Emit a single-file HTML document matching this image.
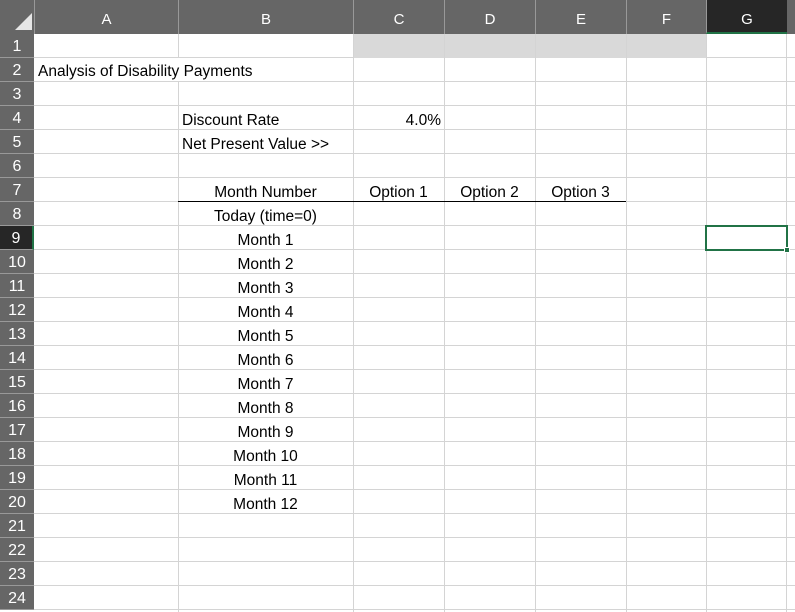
<!DOCTYPE html>
<html><head><style>
*{margin:0;padding:0;box-sizing:border-box}
body{width:795px;height:612px;overflow:hidden;background:#fff;font-family:"Liberation Sans",sans-serif;position:relative}
.hdr{position:absolute;top:0;left:0;width:795px;height:34px;background:#666}
.ch{position:absolute;top:0;height:34px;color:#fff;font-size:15px;text-align:center;line-height:40px;border-left:1px solid #999}
.rh{position:absolute;left:0;width:34px;height:24px;background:#666;color:#fff;font-size:16px;text-align:center;line-height:25px;border-bottom:1px solid #999}
.grid{position:absolute;left:34px;top:34px;width:761px;height:578px;background:repeating-linear-gradient(to bottom,transparent 0 23px,#d4d4d4 23px 24px)}
.vl{position:absolute;top:34px;width:1px;height:578px;background:#d4d4d4}
.t{position:absolute;font-size:15.5px;color:#000;line-height:25px;white-space:nowrap}
.c{text-align:center}
</style></head><body>
<div class="hdr"></div>
<svg style="position:absolute;left:15px;top:13px" width="18" height="18"><polygon points="17,0 17,17 0,17" fill="#e6e6e6"/></svg>
<div class="ch" style="left:34px;width:144px">A</div>
<div class="ch" style="left:178px;width:175px">B</div>
<div class="ch" style="left:353px;width:91px">C</div>
<div class="ch" style="left:444px;width:91px">D</div>
<div class="ch" style="left:535px;width:91px">E</div>
<div class="ch" style="left:626px;width:80px">F</div>
<div class="ch" style="left:706px;width:81px;background:#262626;border-bottom:2px solid #217346">G</div>
<div class="grid"></div>
<div style="position:absolute;left:353px;top:34px;width:353px;height:24px;background:#d9d9d9"></div>
<div class="vl" style="left:178px"></div>
<div class="vl" style="left:353px"></div>
<div class="vl" style="left:444px"></div>
<div class="vl" style="left:535px"></div>
<div class="vl" style="left:626px"></div>
<div class="vl" style="left:706px"></div>
<div class="vl" style="left:786px"></div>
<div style="position:absolute;left:178px;top:201px;width:448px;height:1px;background:#000"></div>

<div class="rh" style="top:34px">1</div>
<div class="rh" style="top:58px">2</div>
<div class="rh" style="top:82px">3</div>
<div class="rh" style="top:106px">4</div>
<div class="rh" style="top:130px">5</div>
<div class="rh" style="top:154px">6</div>
<div class="rh" style="top:178px">7</div>
<div class="rh" style="top:202px">8</div>
<div class="rh" style="top:226px;background:#262626;border-right:2px solid #217346">9</div>
<div class="rh" style="top:250px">10</div>
<div class="rh" style="top:274px">11</div>
<div class="rh" style="top:298px">12</div>
<div class="rh" style="top:322px">13</div>
<div class="rh" style="top:346px">14</div>
<div class="rh" style="top:370px">15</div>
<div class="rh" style="top:394px">16</div>
<div class="rh" style="top:418px">17</div>
<div class="rh" style="top:442px">18</div>
<div class="rh" style="top:466px">19</div>
<div class="rh" style="top:490px">20</div>
<div class="rh" style="top:514px">21</div>
<div class="rh" style="top:538px">22</div>
<div class="rh" style="top:562px">23</div>
<div class="rh" style="top:586px">24</div>

<div class="t" style="left:35px;top:58px;width:318px;height:23px;background:#fff;padding-left:3px;padding-top:2px;line-height:24px">Analysis of Disability Payments</div>
<div class="t" style="left:182px;top:108px">Discount Rate</div>
<div class="t" style="left:353px;top:108px;width:88px;text-align:right">4.0%</div>
<div class="t" style="left:182px;top:132px">Net Present Value &gt;&gt;</div>
<div class="t c" style="left:178px;top:180px;width:175px">Month Number</div>
<div class="t c" style="left:353px;top:180px;width:91px">Option 1</div>
<div class="t c" style="left:444px;top:180px;width:91px">Option 2</div>
<div class="t c" style="left:535px;top:180px;width:91px">Option 3</div>
<div class="t c" style="left:178px;top:204px;width:175px">Today (time=0)</div>
<div class="t c" style="left:178px;top:228px;width:175px">Month 1</div>
<div class="t c" style="left:178px;top:252px;width:175px">Month 2</div>
<div class="t c" style="left:178px;top:276px;width:175px">Month 3</div>
<div class="t c" style="left:178px;top:300px;width:175px">Month 4</div>
<div class="t c" style="left:178px;top:324px;width:175px">Month 5</div>
<div class="t c" style="left:178px;top:348px;width:175px">Month 6</div>
<div class="t c" style="left:178px;top:372px;width:175px">Month 7</div>
<div class="t c" style="left:178px;top:396px;width:175px">Month 8</div>
<div class="t c" style="left:178px;top:420px;width:175px">Month 9</div>
<div class="t c" style="left:178px;top:444px;width:175px">Month 10</div>
<div class="t c" style="left:178px;top:468px;width:175px">Month 11</div>
<div class="t c" style="left:178px;top:492px;width:175px">Month 12</div>

<div style="position:absolute;left:705px;top:225px;width:83px;height:26px;border:2px solid #217346"></div>
<div style="position:absolute;left:784px;top:247px;width:6px;height:6px;background:#217346;border:1px solid #fff"></div>
</body></html>
